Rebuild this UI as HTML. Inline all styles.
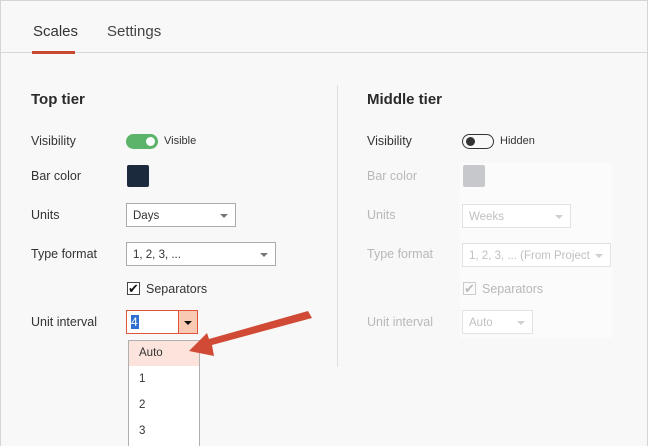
<!DOCTYPE html>
<html style="width:648px;height:446px;overflow:hidden"><head><meta charset="utf-8"><style>
*{box-sizing:border-box;margin:0;padding:0}
body{width:648px;height:446px;overflow:hidden;background:#f8f8f8;font-family:"Liberation Sans",sans-serif;color:#333;position:relative}
.frame{position:absolute;left:0;top:0;width:648px;height:446px;border:1px solid #d4d4d4;border-bottom:none}
.a{position:absolute;white-space:nowrap}
.lbl{font-size:12.5px;color:#333}
.dis{color:#b8b8b8}
.sel{position:absolute;border:1px solid #ababab;background:#fff;font-size:11.5px;padding:6px 0 0 6px;color:#333}
.sel:after{content:"";position:absolute;right:7px;top:10px;border-left:4px solid transparent;border-right:4px solid transparent;border-top:4px solid #777}
.sel.d{border-color:#e2e2e2;color:#c0c0c0}
.sel.d:after{border-top-color:#d0d0d0}
</style></head><body>
<div class="frame"></div>
<div class="a" style="left:33px;top:23px;font-size:15px;color:#333">Scales</div>
<div class="a" style="left:107px;top:23px;font-size:15px;color:#444">Settings</div>
<div class="a" style="left:1px;top:52px;width:646px;height:1px;background:#d8d8d8"></div>
<div class="a" style="left:32px;top:51px;width:43px;height:3px;background:#c8492f"></div>

<div class="a" style="left:31px;top:91px;font-size:15px;font-weight:bold;color:#2a2a2a">Top tier</div>
<div class="a lbl" style="left:31px;top:134px">Visibility</div>
<div class="a" style="left:126px;top:134px;width:32px;height:15px;border-radius:8px;background:#5cb46b"></div>
<div class="a" style="left:146px;top:137px;width:9px;height:9px;border-radius:50%;background:#fff"></div>
<div class="a" style="left:164px;top:135px;font-size:11px">Visible</div>
<div class="a lbl" style="left:31px;top:169px">Bar color</div>
<div class="a" style="left:127px;top:165px;width:22px;height:22px;border-radius:2px;background:#1c2a3e"></div>
<div class="a lbl" style="left:31px;top:208px">Units</div>
<div class="sel" style="left:126px;top:203px;width:110px;height:24px">Days</div>
<div class="a lbl" style="left:31px;top:247px">Type format</div>
<div class="sel" style="left:126px;top:242px;width:150px;height:24px">1, 2, 3, ...</div>
<div class="a" style="left:127px;top:282px;width:13px;height:13px;border:1px solid #444;background:#fff;font-size:13px;line-height:11px;text-align:center;color:#111">✔</div>
<div class="a lbl" style="left:146px;top:282px">Separators</div>
<div class="a lbl" style="left:31px;top:315px">Unit interval</div>
<div class="a" style="left:126px;top:310px;width:72px;height:24px;border:1px solid #e0553a;background:#fff"></div>
<div class="a" style="left:178px;top:311px;width:19px;height:22px;background:#f9c9b4;border-left:1px solid #e0553a"></div>
<div class="a" style="left:184px;top:321px;border-left:4px solid transparent;border-right:4px solid transparent;border-top:4px solid #111"></div>
<div class="a" style="left:131px;top:315px;width:8px;height:14px;background:#2f6fd1;color:#fff;font-size:12px;line-height:14px">4</div>
<div class="a" style="left:128px;top:340px;width:72px;height:106px;border:1px solid #b0b0b0;border-bottom:none;background:#fff"></div>
<div class="a" style="left:129px;top:341px;width:70px;height:25px;background:#fce3dc"></div>
<div class="a" style="left:139px;top:347px;font-size:11.5px">Auto</div>
<div class="a" style="left:139px;top:373px;font-size:11.5px">1</div>
<div class="a" style="left:139px;top:399px;font-size:11.5px">2</div>
<div class="a" style="left:139px;top:425px;font-size:11.5px">3</div>

<div class="a" style="left:337px;top:85px;width:1px;height:282px;background:#e0e0e0"></div>
<div class="a" style="left:460px;top:163px;width:152px;height:175px;background:#fbfbfb"></div>
<div class="a" style="left:367px;top:91px;font-size:15px;font-weight:bold;color:#2a2a2a">Middle tier</div>
<div class="a lbl" style="left:367px;top:134px">Visibility</div>
<div class="a" style="left:462px;top:134px;width:32px;height:15px;border-radius:8px;border:1.5px solid #333"></div>
<div class="a" style="left:466px;top:137px;width:9px;height:9px;border-radius:50%;background:#333"></div>
<div class="a" style="left:500px;top:135px;font-size:11px">Hidden</div>
<div class="a lbl dis" style="left:367px;top:169px">Bar color</div>
<div class="a" style="left:463px;top:165px;width:22px;height:22px;border-radius:2px;background:#c6c8cb"></div>
<div class="a lbl dis" style="left:367px;top:208px">Units</div>
<div class="sel d" style="left:462px;top:204px;width:109px;height:24px">Weeks</div>
<div class="a lbl dis" style="left:367px;top:247px">Type format</div>
<div class="sel d" style="left:462px;top:243px;width:149px;height:24px">1, 2, 3, ... (From Project</div>
<div class="a" style="left:463px;top:282px;width:13px;height:13px;border:1px solid #ccc;font-size:13px;line-height:11px;text-align:center;color:#bbb">✔</div>
<div class="a lbl dis" style="left:482px;top:282px">Separators</div>
<div class="a lbl dis" style="left:367px;top:315px">Unit interval</div>
<div class="sel d" style="left:462px;top:310px;width:71px;height:24px">Auto</div>

<svg class="a" style="left:0;top:0" width="648" height="446">
<polygon points="308,311 312,318 212,345 214,356 189,351 207,333 209,339" fill="#d04a35"/>
</svg>
</body></html>
